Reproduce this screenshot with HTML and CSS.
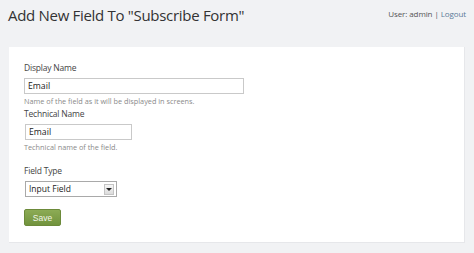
FILE: index.html
```html
<!DOCTYPE html>
<html>
<head>
<meta charset="utf-8">
<link rel="stylesheet" href="styles.css">
</head>
<body>
<div class="header">
  <h1 class="title">Add New Field To "Subscribe Form"</h1>
  <div class="user">User: admin | <a class="logout" href="#">Logout</a></div>
</div>
<div class="card">
  <div class="label">Display Name</div>
  <input class="input input-wide" type="text" value="Email">
  <div class="help">Name of the field as it will be displayed in screens.</div>
  <div class="label">Technical Name</div>
  <input class="input input-short" type="text" value="Email">
  <div class="help">Technical name of the field.</div>
  <div class="label label-gap">Field Type</div>
  <div class="select">
    <span class="select-text">Input Field</span>
    <span class="select-arrow"><span class="tri"></span></span>
  </div>
  <button class="save" type="button">Save</button>
</div>
</body>
</html>
```
FILE: styles.css
```css
html, body {
  margin: 0;
  padding: 0;
}
body {
  background: #f1f2f4;
  font-family: "Open Sans", "Noto Sans", sans-serif;
  color: #333;
  width: 474px;
  height: 253px;
  overflow: hidden;
}
.header {
  display: flex;
  justify-content: space-between;
  align-items: flex-start;
  padding: 3px 8px 0 8px;
  height: 24px;
}
.title {
  margin: 0;
  font-size: 15px;
  font-weight: normal;
  line-height: 24px;
  color: #333;
  letter-spacing: -0.3px;
}
.user {
  font-size: 8px;
  line-height: 14px;
  margin-top: 4px;
  color: #555;
  letter-spacing: -0.1px;
}
.logout {
  color: #5b7a98;
  text-decoration: none;
}
.card {
  margin: 20px 9px 0 9px;
  height: 196px;
  box-sizing: border-box;
  background: #fff;
  border-right: 1px solid #e6e7ea;
  border-bottom: 1px solid #e6e7ea;
  padding: 14px 15px 0 15px;
  display: flex;
  flex-direction: column;
  align-items: flex-start;
}
.label {
  font-size: 8.5px;
  line-height: 14px;
  color: #444;
  letter-spacing: -0.2px;
}
.label-gap {
  margin-top: 11px;
}
.input {
  margin: 3px 0 0 0;
  box-sizing: border-box;
  height: 16px;
  border: 1px solid #c9c9c9;
  padding: 0 3px;
  font-family: "Open Sans", "Noto Sans", sans-serif;
  font-size: 8.7px;
  color: #222;
  background: #fff;
  outline: none;
}
.input-wide {
  width: 220px;
}
.input-short {
  width: 107px;
  margin-left: 1px;
}
.help {
  margin-top: 1px;
  font-size: 7.3px;
  line-height: 12px;
  color: #8a8a8a;
}
.select {
  margin: 3px 0 0 1px;
  box-sizing: border-box;
  width: 92px;
  height: 16px;
  border: 1px solid #a9a9a9;
  display: flex;
  align-items: center;
  justify-content: space-between;
  padding: 0 2px 0 3px;
  background: #fff;
}
.select-text {
  font-size: 8.5px;
  color: #222;
  line-height: 14px;
}
.select-arrow {
  width: 10px;
  height: 11px;
  box-sizing: border-box;
  border: 1px solid #c4c4c4;
  background: linear-gradient(#f6f6f6, #dcdcdc);
  display: flex;
  align-items: center;
  justify-content: center;
}
.tri {
  width: 0;
  height: 0;
  border-left: 3px solid transparent;
  border-right: 3px solid transparent;
  border-top: 3px solid #222;
}
.save {
  margin-top: 12px;
  width: 37px;
  height: 17px;
  border: 1px solid #6c8a3a;
  border-radius: 2px;
  background: linear-gradient(#8cab55, #71933d);
  color: #f2f6ea;
  font-family: "Liberation Sans", Arial, sans-serif;
  font-size: 8.5px;
  padding: 0;
}
```
